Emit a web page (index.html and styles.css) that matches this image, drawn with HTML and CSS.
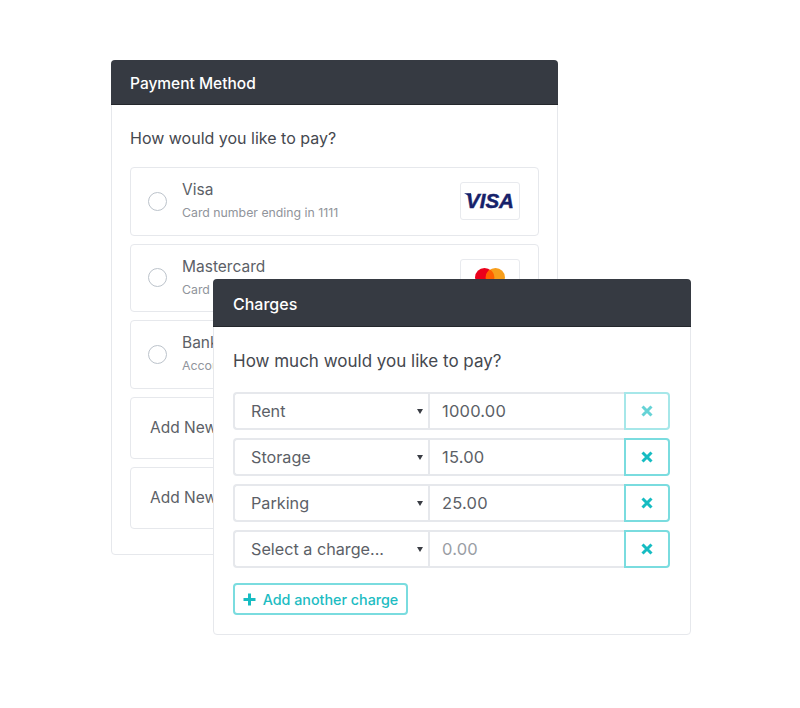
FILE: index.html
```html
<!DOCTYPE html>
<html lang="en">
<head>
<meta charset="utf-8">
<title>Payment</title>
<link rel="stylesheet" href="styles.css">
</head>
<body>
<div class="stage">
  <section class="panel panel-payment">
    <header class="panel-head">Payment Method</header>
    <div class="panel-body">
      <p class="question">How would you like to pay?</p>
      <div class="options">
        <label class="option">
          <span class="radio"></span>
          <span class="option-text"><span class="option-title">Visa</span><span class="option-sub">Card number ending in 1111</span></span>
          <span class="logo"><span class="visa">VISA</span></span>
        </label>
        <label class="option">
          <span class="radio"></span>
          <span class="option-text"><span class="option-title">Mastercard</span><span class="option-sub">Card number ending in 4444</span></span>
          <span class="logo">
            <svg width="30" height="19" viewBox="0 0 30 19"><circle cx="9.5" cy="9.5" r="9.5" fill="#eb001b"/><circle cx="20.5" cy="9.500" r="9.500" fill="#f79e1b"/><path d="M15 1.500a9.500 9.500 0 0 1 0 16a9.500 9.500 0 0 1 0-16z" fill="#ff5f00"/></svg>
          </span>
        </label>
        <label class="option">
          <span class="radio"></span>
          <span class="option-text"><span class="option-title">Bank Account</span><span class="option-sub">Account number ending in 6789</span></span>
        </label>
        <div class="add-row">Add New Card</div>
        <div class="add-row">Add New Bank Account</div>
      </div>
    </div>
  </section>

  <section class="panel panel-charges">
    <header class="panel-head panel-head-tall">Charges</header>
    <div class="panel-body panel-body-charges">
      <p class="question question-large">How much would you like to pay?</p>
      <div class="charges">
        <div class="charge">
          <div class="select"><span>Rent</span><i class="caret"></i></div>
          <div class="amount">1000.00</div>
          <button class="remove remove-faded"><svg width="12" height="12" viewBox="0 0 12 12"><path d="M1.5 1.5l9 9M10.5 1.5l-9 9"/></svg></button>
        </div>
        <div class="charge">
          <div class="select"><span>Storage</span><i class="caret"></i></div>
          <div class="amount">15.00</div>
          <button class="remove"><svg width="12" height="12" viewBox="0 0 12 12"><path d="M1.5 1.5l9 9M10.5 1.5l-9 9"/></svg></button>
        </div>
        <div class="charge">
          <div class="select"><span>Parking</span><i class="caret"></i></div>
          <div class="amount">25.00</div>
          <button class="remove"><svg width="12" height="12" viewBox="0 0 12 12"><path d="M1.5 1.5l9 9M10.5 1.5l-9 9"/></svg></button>
        </div>
        <div class="charge">
          <div class="select"><span>Select a charge...</span><i class="caret"></i></div>
          <div class="amount amount-empty">0.00</div>
          <button class="remove"><svg width="12" height="12" viewBox="0 0 12 12"><path d="M1.5 1.5l9 9M10.5 1.5l-9 9"/></svg></button>
        </div>
      </div>
      <button class="add-charge"><svg width="13" height="13" viewBox="0 0 13 13"><path d="M6.5 .5v12M.5 6.500h12"/></svg>Add another charge</button>
    </div>
  </section>
</div>
</body>
</html>
```
FILE: styles.css
```css
* { box-sizing: border-box; }
html, body { margin: 0; background: #fff; }
body { font-family: Inter, "Open Sans", sans-serif; color: #4a4d55; }
.stage { position: relative; width: 800px; height: 708px; padding: 60px 0 0 111px; }
.panel { background: #fff; border: 1px solid #e6e8ec; border-radius: 4px; }
.panel-payment { width: 447px; height: 495px; }
.panel-charges { position: absolute; left: 213px; top: 279px; width: 478px; height: 355.5px; }
.panel-head { margin: -1px -1px 0; height: 45px; padding: 2px 19px 0; background: #363a42; color: #fff; font-size: 15.5px; font-weight: 500; display: flex; align-items: center; border-bottom: 1px solid #24272c; border-radius: 4px 4px 0 0; }
.panel-head-tall { height: 48px; padding: 2px 20px 0; font-size: 16px; }
.panel-body { padding: 23px 18px 0; }
.panel-body-charges { padding: 24px 19px 0; }
.question { margin: 0; font-size: 16px; line-height: 20px; color: #45484f; }
.question-large { font-size: 17px; }
.options { margin-top: 19px; display: flex; flex-direction: column; gap: 8px; }
.option { height: 68.5px; border: 1px solid #e6e8ec; border-radius: 4px; display: flex; align-items: center; padding: 0 18px 0 17px; }
.radio { width: 19px; height: 19px; border: 1px solid #bcc3cb; border-radius: 50%; flex: none; }
.option-text { margin-left: 15px; flex: 1; display: flex; flex-direction: column; gap: 6px; }
.option-title { font-size: 15.5px; line-height: 18px; color: #5c5f67; }
.option-sub { font-size: 12.3px; line-height: 16px; color: #90949b; }
.logo { width: 60px; height: 38px; border: 1px solid #e8eaee; border-radius: 3px; display: flex; align-items: center; justify-content: center; flex: none; }
.visa { position: relative; font-family: "Liberation Sans", sans-serif; font-size: 20.5px; font-weight: 700; font-style: italic; color: #16216a; -webkit-text-stroke: .5px #16216a; }
.visa::before { content: ""; position: absolute; left: -2px; top: 4px; width: 7px; height: 4px; background: #16216a; clip-path: polygon(0 0, 100% 0, 100% 100%); }
.add-row { height: 62px; border: 1px solid #e6e8ec; border-radius: 4px; display: flex; align-items: center; padding-left: 19px; font-size: 15.5px; color: #5c5f67; }
.charges { margin-top: 21px; display: flex; flex-direction: column; gap: 8px; }
.charge { display: flex; height: 38px; }
.select { width: 195px; border: 2px solid #e6e8ec; border-right: 0; border-radius: 4px 0 0 4px; display: flex; align-items: center; justify-content: space-between; padding: 0 1px 0 16px; font-size: 16.2px; color: #5c5f67; }
.caret { width: 0; height: 0; border-left: 3px solid transparent; border-right: 3px solid transparent; border-top: 5px solid #3a3d44; margin-right: 4px; }
.amount { width: 196px; border: 2px solid #e6e8ec; border-right: 0; display: flex; align-items: center; padding-left: 12px; font-size: 16.5px; letter-spacing: .2px; color: #5c5f67; }
.amount-empty { color: #9a9ea5; }
.remove { width: 46px; padding: 0; background: #fff; border: 2px solid #7adcdf; border-radius: 0 4px 4px 0; display: flex; align-items: center; justify-content: center; }
.remove path { stroke: #16bcc2; stroke-width: 3; fill: none; }
.remove-faded { border-color: #a6e7e9; }
.remove-faded path { stroke: #66d3d6; }
.add-charge { margin-top: 15px; height: 32px; width: 175px; padding: 0; background: #fff; border: 2px solid #7adcdf; border-radius: 4px; display: flex; align-items: center; justify-content: center; gap: 7px; font-family: inherit; font-size: 14.3px; font-weight: 500; color: #20bcc2; }
.add-charge path { stroke: #16bcc2; stroke-width: 3; fill: none; }
```
